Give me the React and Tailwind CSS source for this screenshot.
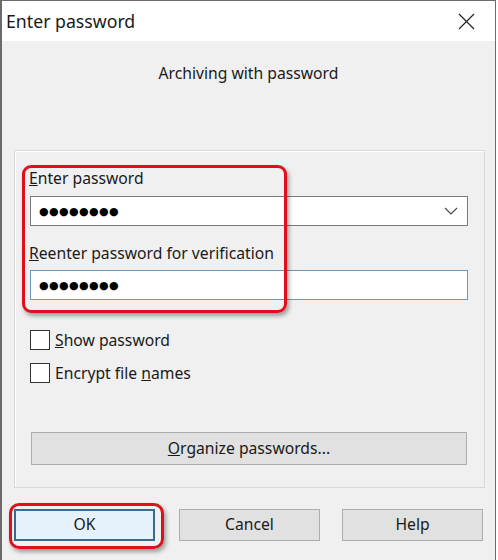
import React from 'react';

const font = { fontFamily: '"Noto Sans", "Open Sans", sans-serif' };

const Dots = () => (
  <span className="text-[11px] tracking-[0.4px] text-black leading-none" style={{ fontFamily: '"DejaVu Sans", sans-serif' }}>
    ●●●●●●●●
  </span>
);

const CheckRow = ({ children }) => (
  <label className="flex items-center gap-[5px] h-[20px]">
    <span className="w-[20px] h-[20px] border border-[#333333] bg-white shrink-0" />
    <span className="text-[15.7px] leading-[20px] text-[#1a1a1a]">{children}</span>
  </label>
);

const Btn = ({ children, className = '' }) => (
  <button className={`w-[141px] h-[32px] text-[15.7px] text-[#1a1a1a] ${className}`}>{children}</button>
);

export default function App() {
  return (
    <div className="w-[498px] h-[560px] bg-white" style={font}>
      <div className="w-[496px] h-[560px] border-l-2 border-r border-t border-[#6b6b6b] flex flex-col">
        {/* title bar */}
        <div className="h-[40px] bg-white flex items-center justify-between pl-[4px] pr-[20px] shrink-0">
          <span className="text-[17.7px] text-[#1a1a1a] pt-[1px]">Enter password</span>
          <svg width="17" height="17" viewBox="0 0 17 17" className="text-[#222]">
            <path d="M1 1 L16 16 M16 1 L1 16" stroke="currentColor" strokeWidth="1.2" fill="none" />
          </svg>
        </div>

        {/* client */}
        <div className="flex-1 bg-[#f0f0f0] flex flex-col">
          <div className="pt-[22px] h-[109px] text-center text-[15.7px] leading-[20px] text-[#1a1a1a]">
            Archiving with password
          </div>

          <div className="relative mx-[12px] mr-[10px] h-[338px] border border-[#d9d9d9] shadow-[inset_1px_1px_0_#ffffff] pl-[15px] pr-[16px] pt-[17px] flex flex-col">
            <span className="text-[15.7px] leading-[20px] text-[#1a1a1a] -ml-[1px]"><u>E</u>nter password</span>
            <div className="mt-[8px] h-[30px] bg-white border border-[#7a7a7a] flex items-center justify-between pl-[8px] pr-[9px]">
              <Dots />
              <svg width="14" height="8" viewBox="0 0 14 8">
                <path d="M1 1 L7 7 L13 1" stroke="#444" strokeWidth="1.1" fill="none" />
              </svg>
            </div>
            <span className="mt-[17px] text-[15.7px] leading-[20px] text-[#1a1a1a] -ml-[1px]"><u>R</u>eenter password for verification</span>
            <div className="mt-[7px] h-[30px] bg-white border border-[#6f97b8] flex items-center pl-[8px]">
              <Dots />
            </div>

            <div className="mt-[30px] flex flex-col gap-[13px]">
              <CheckRow><u>S</u>how password</CheckRow>
              <CheckRow>Encrypt file <u>n</u>ames</CheckRow>
            </div>

            <button className="mt-[49px] ml-[1px] mr-[1px] h-[33px] bg-[#e1e1e1] border border-[#adadad] text-[15.7px] text-[#1a1a1a]">
              <u>O</u>rganize passwords...
            </button>

            {/* red highlight */}
            <div className="absolute left-[7px] top-[14px] w-[265px] h-[148px] rounded-[9px] border-[3px] border-[#e0101a] shadow-[2px_3px_4px_rgba(0,0,0,0.35)] pointer-events-none" />
          </div>

          <div className="relative flex pl-[12px] pt-[21px]">
            <Btn className="bg-[#e5f1fb] border-2 border-[#3a6b8f]">OK</Btn>
            <Btn className="ml-[24px] bg-[#e1e1e1] border border-[#adadad]">Cancel</Btn>
            <Btn className="ml-[22px] bg-[#e1e1e1] border border-[#adadad]">Help</Btn>
            <div className="absolute left-[7px] top-[15px] w-[155px] h-[46px] rounded-[10px] border-[3px] border-[#e0101a] shadow-[2px_3px_4px_rgba(0,0,0,0.35)] pointer-events-none" />
          </div>
        </div>
      </div>
    </div>
  );
}
